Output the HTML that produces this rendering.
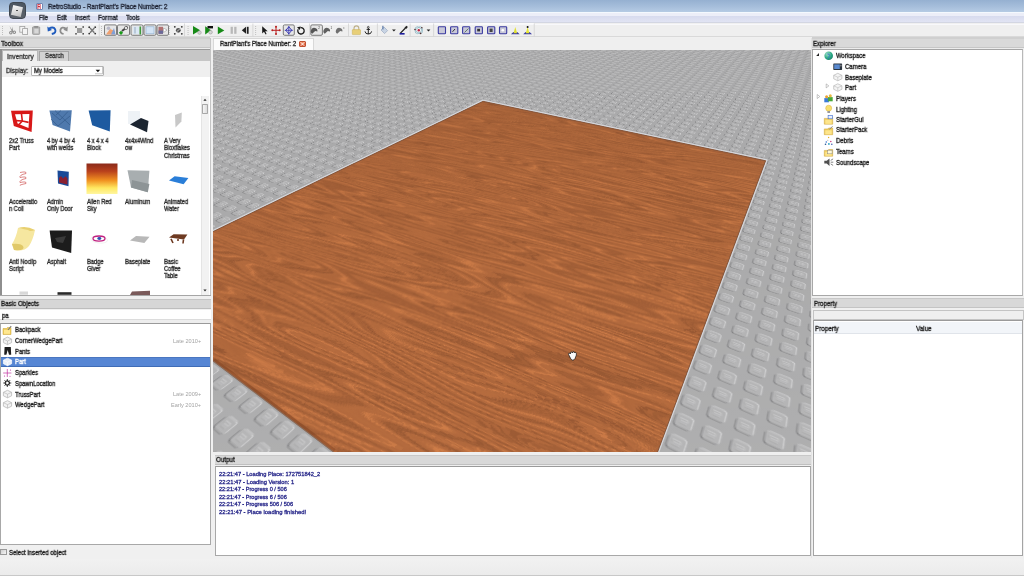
<!DOCTYPE html>
<html><head><meta charset="utf-8">
<style>
*{box-sizing:border-box;margin:0;padding:0}
html,body{width:1024px;height:576px;overflow:hidden;background:#f0f0f0;font-family:"Liberation Sans",sans-serif;color:#000}
.a{position:absolute}
.t{position:absolute;white-space:nowrap;font-size:6px;line-height:1;will-change:transform}
svg{overflow:visible}
</style></head><body>
<!-- title bar -->
<div class="a" style="left:0px;top:0px;width:1024px;height:11.6px;background:linear-gradient(#95b0d1,#a6bedb 55%,#b5cbe4)"></div>
<div class="a" style="left:0px;top:11.6px;width:1024px;height:1.4px;background:#f4f9fe"></div>
<div class="a" style="left:0px;top:13px;width:1024px;height:3px;background:#eceef8"></div>
<div class="a" style="left:0px;top:16px;width:1024px;height:6.2px;background:linear-gradient(#d7dbee,#e1e4f3)"></div>
<div class="a" style="left:0px;top:22.2px;width:1024px;height:1.3px;background:#d3d6e2"></div>
<div class="a" style="left:8.8px;top:2.1px;width:17px;height:17px;border-radius:4px;background:linear-gradient(#4c5661,#5c626a);border:0.6px solid #3e4650"></div>
<div class="a" style="left:11.85px;top:5.65px;width:9.7px;height:9.7px;background:linear-gradient(150deg,#fafafa,#d0d0d0 70%,#bdbdbd);transform:rotate(13deg)"></div>
<div class="a" style="left:16.2px;top:9.6px;width:1.7px;height:1.7px;background:#2a2a2a;border-radius:0.4px"></div>
<div class="a" style="left:36px;top:2.5px;width:7.2px;height:7.5px;background:#fff;border:0.8px solid #7388b4;border-radius:1px"></div>
<div class="t" style="left:37.3px;top:4.00px;font-size:6.72px;color:#c8283c;transform:scaleX(0.893);transform-origin:0 0;font-weight:bold">R</div>
<div class="t" style="left:48.2px;top:3.00px;font-size:7.06px;color:#1c2030;transform:scaleX(0.893);transform-origin:0 0;-webkit-text-stroke:0.32px #1c2030">RetroStudio - RantPlant's Place Number: 2</div>
<div class="t" style="left:38.8px;top:15.00px;font-size:6.27px;color:#22262e;transform:scaleX(0.893);transform-origin:0 0;-webkit-text-stroke:0.32px #22262e">File</div>
<div class="t" style="left:56.7px;top:15.00px;font-size:6.27px;color:#22262e;transform:scaleX(0.893);transform-origin:0 0;-webkit-text-stroke:0.32px #22262e">Edit</div>
<div class="t" style="left:75.1px;top:15.00px;font-size:6.61px;color:#22262e;transform:scaleX(0.893);transform-origin:0 0;-webkit-text-stroke:0.32px #22262e">Insert</div>
<div class="t" style="left:97.7px;top:15.00px;font-size:6.94px;color:#22262e;transform:scaleX(0.893);transform-origin:0 0;-webkit-text-stroke:0.32px #22262e">Format</div>
<div class="t" style="left:125.5px;top:15.00px;font-size:6.61px;color:#22262e;transform:scaleX(0.893);transform-origin:0 0;-webkit-text-stroke:0.32px #22262e">Tools</div>
<!-- toolbar -->
<div class="a" style="left:0px;top:23.5px;width:1024px;height:1px;background:#f8f8fb"></div>
<div class="a" style="left:0px;top:24.5px;width:1024px;height:12px;background:#efefef"></div>
<div class="a" style="left:0px;top:36.4px;width:1024px;height:1.1px;background:#d9d9d9"></div>
<div class="a" style="left:0px;top:37.5px;width:1024px;height:0.6px;background:#f3f3f3"></div>
<svg class="a" style="left:0;top:0" width="1024" height="40" viewBox="0 0 1024 40">
<rect x="0" y="23" width="534" height="1" fill="#fbfbfb"/><rect x="533.8" y="23.5" width="0.8" height="13" fill="#d2d2d2"/><rect x="2.1" y="26.0" width="0.9" height="0.9" fill="#b4b4b4"/><rect x="2.1" y="28.0" width="0.9" height="0.9" fill="#b4b4b4"/><rect x="2.1" y="30.0" width="0.9" height="0.9" fill="#b4b4b4"/><rect x="2.1" y="32.0" width="0.9" height="0.9" fill="#b4b4b4"/><rect x="2.1" y="34.0" width="0.9" height="0.9" fill="#b4b4b4"/><rect x="101.1" y="26.0" width="0.9" height="0.9" fill="#b4b4b4"/><rect x="101.1" y="28.0" width="0.9" height="0.9" fill="#b4b4b4"/><rect x="101.1" y="30.0" width="0.9" height="0.9" fill="#b4b4b4"/><rect x="101.1" y="32.0" width="0.9" height="0.9" fill="#b4b4b4"/><rect x="101.1" y="34.0" width="0.9" height="0.9" fill="#b4b4b4"/><rect x="168.8" y="26.0" width="0.9" height="0.9" fill="#b4b4b4"/><rect x="168.8" y="28.0" width="0.9" height="0.9" fill="#b4b4b4"/><rect x="168.8" y="30.0" width="0.9" height="0.9" fill="#b4b4b4"/><rect x="168.8" y="32.0" width="0.9" height="0.9" fill="#b4b4b4"/><rect x="168.8" y="34.0" width="0.9" height="0.9" fill="#b4b4b4"/><rect x="187.6" y="26.0" width="0.9" height="0.9" fill="#b4b4b4"/><rect x="187.6" y="28.0" width="0.9" height="0.9" fill="#b4b4b4"/><rect x="187.6" y="30.0" width="0.9" height="0.9" fill="#b4b4b4"/><rect x="187.6" y="32.0" width="0.9" height="0.9" fill="#b4b4b4"/><rect x="187.6" y="34.0" width="0.9" height="0.9" fill="#b4b4b4"/><rect x="255.2" y="26.0" width="0.9" height="0.9" fill="#b4b4b4"/><rect x="255.2" y="28.0" width="0.9" height="0.9" fill="#b4b4b4"/><rect x="255.2" y="30.0" width="0.9" height="0.9" fill="#b4b4b4"/><rect x="255.2" y="32.0" width="0.9" height="0.9" fill="#b4b4b4"/><rect x="255.2" y="34.0" width="0.9" height="0.9" fill="#b4b4b4"/><rect x="98.8" y="23.5" width="0.8" height="13" fill="#d2d2d2"/><rect x="166.8" y="23.5" width="0.8" height="13" fill="#d2d2d2"/><rect x="184.2" y="23.5" width="0.8" height="13" fill="#d2d2d2"/><rect x="252.5" y="23.5" width="0.8" height="13" fill="#d2d2d2"/><rect x="309.2" y="23.5" width="0.8" height="13" fill="#d2d2d2"/><rect x="348.2" y="23.5" width="0.8" height="13" fill="#d2d2d2"/><rect x="376.9" y="23.5" width="0.8" height="13" fill="#d2d2d2"/><rect x="409.7" y="23.5" width="0.8" height="13" fill="#d2d2d2"/><rect x="433.3" y="23.5" width="0.8" height="13" fill="#d2d2d2"/><g fill="#8a8a8a"><circle cx="10.8" cy="32.8" r="1.7"/><circle cx="14.3" cy="32.2" r="1.7"/><path d="M9.5 26 L13.2 31.5 L12.2 32 Z"/><path d="M12.6 26.5 L11.5 31.8 L12.8 31.8Z"/></g><circle cx="10.8" cy="32.8" r="0.7" fill="#efefef"/><circle cx="14.3" cy="32.2" r="0.7" fill="#efefef"/><g fill="#f4f4f4" stroke="#a0a0a0" stroke-width="0.8"><rect x="19.8" y="26.4" width="5" height="5.8"/><rect x="22.6" y="28.6" width="5" height="5.8"/></g><rect x="32.5" y="26.8" width="7.2" height="7.6" rx="0.8" fill="#b5b5b5" stroke="#8f8f8f" stroke-width="0.7"/><rect x="34.2" y="26" width="3.8" height="1.8" fill="#8f8f8f"/><rect x="34.3" y="28.8" width="4.2" height="4.6" fill="#d8d8d8"/><path d="M49 28.5 Q53.5 26.2 55.2 29.5 Q56.6 33 51.8 34" fill="none" stroke="#1f5bbd" stroke-width="1.9"/><path d="M47.3 26.6 L47.8 31.6 L52 30 Z" fill="#1f5bbd"/><path d="M66 28.6 Q61.6 26.3 60.5 29.6 Q59.6 33 63.6 34" fill="none" stroke="#8c8c8c" stroke-width="1.8"/><path d="M67.8 26.4 L67.4 31.6 L63.4 29.8 Z" fill="#8c8c8c"/><g fill="#555"><rect x="75.2" y="26.2" width="1.6" height="1.6"/><rect x="82.4" y="26.2" width="1.6" height="1.6"/><rect x="75.2" y="33" width="1.6" height="1.6"/><rect x="82.4" y="33" width="1.6" height="1.6"/></g><rect x="77" y="28" width="5.2" height="5" fill="#9a9a9a"/><g fill="#333"><circle cx="89.2" cy="27.2" r="0.9"/><circle cx="95.2" cy="27.2" r="0.9"/><circle cx="89.2" cy="33.6" r="0.9"/><circle cx="95.2" cy="33.6" r="0.9"/></g><path d="M90 28 L94.4 32.8 M94.4 28 L90 32.8" stroke="#777" stroke-width="1.4"/><rect x="104.5" y="24.9" width="12.0" height="10.4" rx="1.3" fill="#e6e6e6" stroke="#6e6e6e" stroke-width="0.9"/><rect x="117.5" y="24.9" width="12.0" height="10.4" rx="1.3" fill="#e6e6e6" stroke="#6e6e6e" stroke-width="0.9"/><rect x="131.0" y="24.9" width="12.0" height="10.4" rx="1.3" fill="#e6e6e6" stroke="#6e6e6e" stroke-width="0.9"/><rect x="144.0" y="24.9" width="12.0" height="10.4" rx="1.3" fill="#e6e6e6" stroke="#6e6e6e" stroke-width="0.9"/><rect x="157.0" y="24.9" width="11.5" height="10.4" rx="1.3" fill="#e6e6e6" stroke="#6e6e6e" stroke-width="0.9"/><path d="M106 34.5 L110 29 L115 31 L115 34.5Z" fill="#f0a070"/><path d="M111 34.5 L114 28 L115.5 34.5Z" fill="#7fa0d8"/><circle cx="108.5" cy="28.3" r="1.8" fill="#b8b8c8"/><rect x="119.5" y="31.3" width="3" height="3" fill="#1b9a1b" transform="rotate(45 121 32.8)"/><path d="M122 31 L127.5 26.8" stroke="#444" stroke-width="2"/><circle cx="126" cy="28" r="1.6" fill="#eee" stroke="#444" stroke-width="0.6"/><rect x="133" y="26.5" width="6" height="7.6" fill="#dbe8f5"/><rect x="139.5" y="26.5" width="1.6" height="8" fill="#3c9a3c"/><rect x="134.5" y="27" width="1" height="6.5" fill="#9ab"/><rect x="146" y="26.8" width="8" height="7" fill="#d4e4f5" stroke="#8aaed0" stroke-width="0.6"/><rect x="158.5" y="26.8" width="4.5" height="7" fill="#b07070"/><rect x="158.5" y="30.5" width="4.5" height="3.3" fill="#6a6a9a"/><path d="M163.5 28 L167 30 L163.5 32.5Z" fill="#fff" stroke="#888" stroke-width="0.5"/><g fill="#333"><circle cx="174.8" cy="26.8" r="0.9"/><circle cx="181.8" cy="26.8" r="0.9"/><circle cx="174.8" cy="33.8" r="0.9"/><circle cx="181.8" cy="33.8" r="0.9"/></g><circle cx="178.3" cy="30.3" r="2.4" fill="#555"/><path d="M176.8 31.5 L179.8 29" stroke="#ddd" stroke-width="0.8"/><path d="M193 26 L193 34.5 L200.2 30.2Z" fill="#178a17"/><circle cx="199.5" cy="32.6" r="1.8" fill="#d0d0d0" stroke="#999" stroke-width="0.5"/><path d="M205.2 26.2 L205.2 34.5 L211 30.3Z" fill="#178a17"/><rect x="207.5" y="26" width="5.5" height="2.4" fill="#111"/><circle cx="210.5" cy="32.2" r="1.8" fill="#d8d8d8" stroke="#888" stroke-width="0.5"/><path d="M217.8 26.5 L217.8 34.2 L224.3 30.4Z" fill="#178a17"/><rect x="230.6" y="26.8" width="2.3" height="7" fill="#b8b8b8"/><rect x="234.2" y="26.8" width="2.3" height="7" fill="#b8b8b8"/><path d="M241.8 30.3 L246 26.8 L246 33.8Z" fill="#222"/><rect x="246.8" y="26.8" width="1.8" height="7" fill="#222"/><path d="M262.2 26.3 L262.2 33.5 L264 31.8 L265.6 34.4 L266.6 33.9 L265.2 31.2 L267.7 31.2Z" fill="#1a1a1a"/><path d="M276 26.5 V34.2 M272.2 30.3 H279.8" stroke="#b82020" stroke-width="1"/><g fill="#b82020"><circle cx="276" cy="26.7" r="1"/><circle cx="276" cy="34" r="1"/><circle cx="272.3" cy="30.3" r="1"/><circle cx="279.7" cy="30.3" r="1"/></g><rect x="283.3" y="24.9" width="11.0" height="10.4" rx="1.3" fill="#e6e6e6" stroke="#6e6e6e" stroke-width="0.9"/><path d="M288.8 26.8 L291.8 30.3 L288.8 33.8 L285.8 30.3Z" fill="none" stroke="#2a2ab0" stroke-width="0.9"/><path d="M288.8 26 V34.6 M284.8 30.3 H292.8" stroke="#2a2ab0" stroke-width="0.8"/><path d="M300.6 27.6 A3.2 3.2 0 1 1 298.2 29.2" fill="none" stroke="#1a1a1a" stroke-width="1.3"/><path d="M297 27.2 L300.8 26.6 L299.8 30Z" fill="#1a1a1a"/><rect x="310.8" y="24.9" width="11.6" height="10.4" rx="1.3" fill="#e6e6e6" stroke="#6e6e6e" stroke-width="0.9"/><path d="M312.2 33.8 A3.3 3.3 0 1 1 317.4 31.6 L315.2 31 Z" fill="#555"/><path d="M324.8 33.8 A3.3 3.3 0 1 1 330.0 31.6 L327.8 31 Z" fill="#606060"/><path d="M337.2 33.8 A3.3 3.3 0 1 1 342.4 31.6 L340.2 31 Z" fill="#707070"/><text x="318.3" y="28.8" font-size="3" fill="#333" font-family="Liberation Sans">2</text><text x="330.5" y="28.6" font-size="3" fill="#444" font-family="Liberation Sans">1</text><text x="343" y="28.6" font-size="3" fill="#777" font-family="Liberation Sans">x</text><path d="M354 30 V28.3 A2.4 2.4 0 0 1 358.8 28.3 V30" fill="none" stroke="#bdb08a" stroke-width="1.1"/><rect x="352.3" y="29.6" width="8.2" height="5" rx="0.6" fill="#e8cf78" stroke="#c9ae55" stroke-width="0.5"/><circle cx="368.3" cy="27.3" r="0.9" fill="none" stroke="#222" stroke-width="0.7"/><path d="M368.3 28 V34 M366.6 29.4 H370 M365 31.4 Q365.5 34.2 368.3 34 Q371.1 34.2 371.6 31.4" fill="none" stroke="#222" stroke-width="1"/><path d="M381 30 L384 27 L387.6 30.6 L384.6 33.6Z" fill="#c8d4e4" stroke="#90a0b8" stroke-width="0.6"/><rect x="382.3" y="25.8" width="1.2" height="3.6" fill="#5a78a8"/><path d="M392 29.6 L395.8 29.6 L393.9 31.6Z" fill="#222"/><path d="M400.2 33.4 L405.5 28" stroke="#222" stroke-width="1.3"/><path d="M404.5 27.4 L406.6 25.8 L407.8 27 L406.2 29.1Z" fill="#222"/><rect x="399.6" y="33" width="5" height="1.6" fill="#1c1c9c"/><ellipse cx="418.8" cy="30.2" rx="4.2" ry="2.6" fill="none" stroke="#7ab" stroke-width="0.6" transform="rotate(40 418.8 30.2)"/><ellipse cx="418.8" cy="30.2" rx="4.2" ry="2.6" fill="none" stroke="#7ab" stroke-width="0.6" transform="rotate(-40 418.8 30.2)"/><circle cx="418.8" cy="30.2" r="1.2" fill="#c02040"/><circle cx="415" cy="29.5" r="0.8" fill="#533"/><circle cx="421.8" cy="27.8" r="0.8" fill="#533"/><circle cx="420.6" cy="33.4" r="0.8" fill="#533"/><path d="M426.6 29.6 L430.4 29.6 L428.5 31.6Z" fill="#222"/><rect x="438.3" y="26.8" width="7.2" height="7" rx="0.8" fill="#c8c8d8" stroke="#3a3aa0" stroke-width="1.1"/><rect x="450.6" y="26.8" width="7.2" height="7" rx="0.8" fill="#c8c8d8" stroke="#3a3aa0" stroke-width="1.1"/><rect x="462.6" y="26.8" width="7.2" height="7" rx="0.8" fill="#c8c8d8" stroke="#3a3aa0" stroke-width="1.1"/><rect x="475.2" y="26.8" width="7.2" height="7" rx="0.8" fill="#c8c8d8" stroke="#3a3aa0" stroke-width="1.1"/><rect x="487.6" y="26.8" width="7.2" height="7" rx="0.8" fill="#c8c8d8" stroke="#3a3aa0" stroke-width="1.1"/><rect x="499.5" y="26.8" width="7.2" height="7" rx="0.8" fill="#c8c8d8" stroke="#3a3aa0" stroke-width="1.1"/><path d="M452.5 31.8 L455 29" stroke="#222" stroke-width="0.9"/><path d="M464.5 32.5 L468.5 28.5" stroke="#4a6a4a" stroke-width="0.8"/><rect x="477.2" y="28.8" width="2.8" height="2.6" fill="#333"/><rect x="489.6" y="28.6" width="3" height="3.4" fill="#444"/><circle cx="502.8" cy="30.3" r="1.3" fill="#fff"/><path d="M510.9 34.2 L519.6999999999999 34.2 L517.1999999999999 32 L513.4 32Z" fill="#3a3aa0"/><path d="M513.5 33.2 L515.3 27 L517.1 33.2Z" fill="#e0e030"/><path d="M523.2 34.2 L532.0 34.2 L529.5 32 L525.7 32Z" fill="#3a3aa0"/><path d="M525.8000000000001 33.2 L527.6 27 L529.4000000000001 33.2Z" fill="#e8e830"/><circle cx="527.6" cy="27" r="1" fill="#111"/></svg>
<!-- viewport -->
<div id="view" class="a" style="left:213px;top:50px;width:598px;height:402px;background:#acacad;overflow:hidden">
<div class="a" style="left:0;top:0;width:598px;height:402px;clip-path:polygon(270px 0,270px 51px,282px 402px,598px 402px,598px 0)"><svg class="a" width="2060" height="1940" style="left:0;top:0;transform-origin:0 0;transform:matrix3d(0.11417096,0.025133135,0,-0.00019577507,-0.20412521,0.040838847,0,-0.00031814244,0,0,1,0,214.72203,-51.111953,0,1)">
<defs><pattern id="rstud" width="20" height="20" patternUnits="userSpaceOnUse">
<rect width="20" height="20" fill="#aaaaab"/>
<rect x="3.4" y="5.2" width="12" height="11.4" rx="2.6" fill="#7e7e80"/>
<rect x="5.1" y="3.5" width="12" height="11.4" rx="2.6" fill="#d2d2d3"/>
<rect x="4.3" y="4.3" width="12" height="11.4" rx="2.6" fill="#b2b2b3"/>
<path d="M7.5 7.5 h5.5 v2.2 h-5.5 z M7.5 11.5 h5.5" fill="none" stroke="#c4c4c5" stroke-width="0.9"/>
<path d="M7.2 8.2 v1.8 M7.2 12 h5.5" fill="none" stroke="#9a9a9b" stroke-width="0.6"/>
</pattern></defs>
<filter id="rbb0" x="0" y="0" width="2060" height="1940" filterUnits="userSpaceOnUse"><feGaussianBlur stdDeviation="1.3"/></filter><clipPath id="rbc0"><path d="M0.0 0.0 L2060.0 0.0 L2060.0 459.3 L0.0 1727.2Z"/></clipPath><g clip-path="url(#rbc0)"><rect width="2060" height="1940" fill="url(#rstud)" filter="url(#rbb0)"/></g>
<filter id="rbb1" x="0" y="0" width="2060" height="1940" filterUnits="userSpaceOnUse"><feGaussianBlur stdDeviation="0.7"/></filter><clipPath id="rbc1"><path d="M2060.0 448.5 L2060.0 730.2 L94.4 1940.0 L0.0 1940.0 L0.0 1716.4Z"/></clipPath><g clip-path="url(#rbc1)"><rect width="2060" height="1940" fill="url(#rstud)" filter="url(#rbb1)"/></g>
<filter id="rbb2" x="0" y="0" width="2060" height="1940" filterUnits="userSpaceOnUse"><feGaussianBlur stdDeviation="0.35"/></filter><clipPath id="rbc2"><path d="M2060.0 719.4 L2060.0 1001.1 L534.6 1940.0 L76.8 1940.0Z"/></clipPath><g clip-path="url(#rbc2)"><rect width="2060" height="1940" fill="url(#rstud)" filter="url(#rbb2)"/></g>
<clipPath id="rbc3"><path d="M2060.0 990.3 L2060.0 1940.0 L517.0 1940.0Z"/></clipPath><g clip-path="url(#rbc3)"><rect width="2060" height="1940" fill="url(#rstud)"/></g>
</svg></div>
<div class="a" style="left:0;top:0;width:598px;height:402px;clip-path:polygon(0 0,270px 0,270px 51px,282px 402px,0 402px)"><svg class="a" width="2060" height="1940" style="left:0;top:0;transform-origin:0 0;transform:matrix3d(0.11444891,0.025194322,0,-0.00019625169,-0.20462216,0.04093827,0,-0.00031891697,0,0,1,0,215.46146,-50.923858,0,1)">
<defs><pattern id="lstud" width="20" height="20" patternUnits="userSpaceOnUse">
<rect width="20" height="20" fill="#aaaaab"/>
<rect x="3.4" y="5.2" width="12" height="11.4" rx="2.6" fill="#7e7e80"/>
<rect x="5.1" y="3.5" width="12" height="11.4" rx="2.6" fill="#d2d2d3"/>
<rect x="4.3" y="4.3" width="12" height="11.4" rx="2.6" fill="#b2b2b3"/>
<path d="M7.5 7.5 h5.5 v2.2 h-5.5 z M7.5 11.5 h5.5" fill="none" stroke="#c4c4c5" stroke-width="0.9"/>
<path d="M7.2 8.2 v1.8 M7.2 12 h5.5" fill="none" stroke="#9a9a9b" stroke-width="0.6"/>
</pattern></defs>
<filter id="lbb0" x="0" y="0" width="2060" height="1940" filterUnits="userSpaceOnUse"><feGaussianBlur stdDeviation="1.3"/></filter><clipPath id="lbc0"><path d="M0.0 0.0 L2060.0 0.0 L2060.0 451.7 L0.0 1719.6Z"/></clipPath><g clip-path="url(#lbc0)"><rect width="2060" height="1940" fill="url(#lstud)" filter="url(#lbb0)"/></g>
<filter id="lbb1" x="0" y="0" width="2060" height="1940" filterUnits="userSpaceOnUse"><feGaussianBlur stdDeviation="0.7"/></filter><clipPath id="lbc1"><path d="M2060.0 440.8 L2060.0 722.6 L82.0 1940.0 L0.0 1940.0 L0.0 1708.7Z"/></clipPath><g clip-path="url(#lbc1)"><rect width="2060" height="1940" fill="url(#lstud)" filter="url(#lbb1)"/></g>
<filter id="lbb2" x="0" y="0" width="2060" height="1940" filterUnits="userSpaceOnUse"><feGaussianBlur stdDeviation="0.35"/></filter><clipPath id="lbc2"><path d="M2060.0 711.7 L2060.0 993.5 L522.2 1940.0 L64.4 1940.0Z"/></clipPath><g clip-path="url(#lbc2)"><rect width="2060" height="1940" fill="url(#lstud)" filter="url(#lbb2)"/></g>
<clipPath id="lbc3"><path d="M2060.0 982.7 L2060.0 1940.0 L504.6 1940.0Z"/></clipPath><g clip-path="url(#lbc3)"><rect width="2060" height="1940" fill="url(#lstud)"/></g>
</svg></div>
<div class="a" style="left:0;top:0;width:598px;height:402px;background:linear-gradient(rgba(255,255,255,0) 35%,rgba(255,255,255,0.06))"></div>
<svg class="a" width="1000" height="1000" style="left:0;top:0;transform-origin:0 0;transform:matrix3d(0.14525791,0.031976491,0,-0.00024908153,-0.32226203,0.064474201,0,-0.00050226638,0,0,1,0,270,51,0,1)">
<defs><filter id="wood0" x="-150" y="-150" width="1300" height="1300" filterUnits="userSpaceOnUse" color-interpolation-filters="sRGB">
<feTurbulence type="fractalNoise" baseFrequency="0.0012 0.018" numOctaves="3" seed="11"/>
<feColorMatrix type="matrix" values="1 0 0 0 0  1 0 0 0 0  1 0 0 0 0  0 0 0 0 1"/>
<feComponentTransfer>
<feFuncR type="table" tableValues="0.716 0.711 0.740 0.843 0.726 0.716 0.602 0.692 0.619 0.711 0.729 0.681 0.724 0.810 0.717 0.700 0.602 0.680 0.587 0.724 0.722 0.683 0.740 0.805 0.721 0.679 0.601 0.711 0.584 0.691 0.733 0.717 0.716 0.844 0.717 0.705 0.611 0.715 0.607 0.726 0.728 0.690 0.719 0.806 0.698 0.676 0.615 0.699 0.574 0.713 0.702 0.690 0.741 0.821 0.706 0.696 0.634 0.673 0.620 0.682 0.722 0.715 0.703 0.835 0.709 0.700 0.601 0.672 0.583 0.726 0.696 0.711 0.746 0.843 0.708 0.690 0.626 0.707 0.579 0.716 0.724 0.716 0.704 0.843 0.696 0.689 0.630 0.713 0.590 0.724 0.712 0.690 0.717 0.807 0.695 0.680 0.633 0.717 0.582 0.683 0.733 0.701 0.721 0.809 0.720 0.712 0.622 0.690 0.577 0.724 0.688 0.699 0.742 0.804 0.726 0.718 0.631 0.707 0.579 0.701 0.693 0.715 0.716 0.820 0.739 0.713 0.647 0.692"/>
<feFuncG type="table" tableValues="0.425 0.422 0.441 0.510 0.433 0.426 0.350 0.410 0.361 0.423 0.434 0.402 0.431 0.488 0.426 0.415 0.350 0.402 0.340 0.431 0.430 0.404 0.441 0.485 0.429 0.401 0.350 0.423 0.338 0.409 0.437 0.426 0.426 0.510 0.426 0.418 0.356 0.425 0.353 0.433 0.434 0.408 0.428 0.485 0.414 0.399 0.359 0.414 0.332 0.424 0.417 0.409 0.442 0.495 0.419 0.412 0.371 0.397 0.362 0.403 0.429 0.425 0.417 0.505 0.421 0.415 0.350 0.397 0.337 0.432 0.412 0.422 0.446 0.510 0.420 0.408 0.366 0.420 0.335 0.426 0.431 0.426 0.418 0.510 0.412 0.408 0.368 0.424 0.342 0.431 0.423 0.409 0.426 0.486 0.412 0.402 0.371 0.426 0.337 0.404 0.437 0.416 0.429 0.488 0.428 0.423 0.364 0.409 0.334 0.431 0.407 0.414 0.443 0.484 0.432 0.427 0.369 0.420 0.335 0.416 0.411 0.425 0.426 0.494 0.441 0.424 0.380 0.410"/>
<feFuncB type="table" tableValues="0.247 0.245 0.257 0.297 0.252 0.248 0.203 0.238 0.210 0.246 0.252 0.234 0.251 0.284 0.248 0.241 0.203 0.234 0.198 0.251 0.250 0.235 0.257 0.282 0.249 0.233 0.203 0.246 0.196 0.238 0.254 0.248 0.247 0.297 0.248 0.243 0.207 0.247 0.205 0.252 0.252 0.237 0.249 0.282 0.241 0.232 0.208 0.241 0.193 0.246 0.242 0.237 0.257 0.288 0.244 0.240 0.216 0.231 0.210 0.234 0.250 0.247 0.243 0.294 0.245 0.241 0.203 0.231 0.196 0.251 0.240 0.246 0.259 0.297 0.244 0.237 0.212 0.244 0.195 0.248 0.251 0.248 0.243 0.297 0.240 0.237 0.214 0.247 0.199 0.251 0.246 0.238 0.248 0.283 0.239 0.234 0.215 0.248 0.196 0.235 0.254 0.242 0.250 0.284 0.249 0.246 0.211 0.237 0.194 0.251 0.237 0.241 0.257 0.282 0.251 0.248 0.214 0.244 0.195 0.242 0.239 0.247 0.248 0.288 0.256 0.246 0.221 0.238"/>
</feComponentTransfer><feGaussianBlur stdDeviation="0.2 3.2"/>
</filter><filter id="wood1" x="-150" y="-150" width="1300" height="1300" filterUnits="userSpaceOnUse" color-interpolation-filters="sRGB">
<feTurbulence type="fractalNoise" baseFrequency="0.0012 0.018" numOctaves="3" seed="11"/>
<feColorMatrix type="matrix" values="1 0 0 0 0  1 0 0 0 0  1 0 0 0 0  0 0 0 0 1"/>
<feComponentTransfer>
<feFuncR type="table" tableValues="0.716 0.711 0.740 0.843 0.726 0.716 0.602 0.692 0.619 0.711 0.729 0.681 0.724 0.810 0.717 0.700 0.602 0.680 0.587 0.724 0.722 0.683 0.740 0.805 0.721 0.679 0.601 0.711 0.584 0.691 0.733 0.717 0.716 0.844 0.717 0.705 0.611 0.715 0.607 0.726 0.728 0.690 0.719 0.806 0.698 0.676 0.615 0.699 0.574 0.713 0.702 0.690 0.741 0.821 0.706 0.696 0.634 0.673 0.620 0.682 0.722 0.715 0.703 0.835 0.709 0.700 0.601 0.672 0.583 0.726 0.696 0.711 0.746 0.843 0.708 0.690 0.626 0.707 0.579 0.716 0.724 0.716 0.704 0.843 0.696 0.689 0.630 0.713 0.590 0.724 0.712 0.690 0.717 0.807 0.695 0.680 0.633 0.717 0.582 0.683 0.733 0.701 0.721 0.809 0.720 0.712 0.622 0.690 0.577 0.724 0.688 0.699 0.742 0.804 0.726 0.718 0.631 0.707 0.579 0.701 0.693 0.715 0.716 0.820 0.739 0.713 0.647 0.692"/>
<feFuncG type="table" tableValues="0.425 0.422 0.441 0.510 0.433 0.426 0.350 0.410 0.361 0.423 0.434 0.402 0.431 0.488 0.426 0.415 0.350 0.402 0.340 0.431 0.430 0.404 0.441 0.485 0.429 0.401 0.350 0.423 0.338 0.409 0.437 0.426 0.426 0.510 0.426 0.418 0.356 0.425 0.353 0.433 0.434 0.408 0.428 0.485 0.414 0.399 0.359 0.414 0.332 0.424 0.417 0.409 0.442 0.495 0.419 0.412 0.371 0.397 0.362 0.403 0.429 0.425 0.417 0.505 0.421 0.415 0.350 0.397 0.337 0.432 0.412 0.422 0.446 0.510 0.420 0.408 0.366 0.420 0.335 0.426 0.431 0.426 0.418 0.510 0.412 0.408 0.368 0.424 0.342 0.431 0.423 0.409 0.426 0.486 0.412 0.402 0.371 0.426 0.337 0.404 0.437 0.416 0.429 0.488 0.428 0.423 0.364 0.409 0.334 0.431 0.407 0.414 0.443 0.484 0.432 0.427 0.369 0.420 0.335 0.416 0.411 0.425 0.426 0.494 0.441 0.424 0.380 0.410"/>
<feFuncB type="table" tableValues="0.247 0.245 0.257 0.297 0.252 0.248 0.203 0.238 0.210 0.246 0.252 0.234 0.251 0.284 0.248 0.241 0.203 0.234 0.198 0.251 0.250 0.235 0.257 0.282 0.249 0.233 0.203 0.246 0.196 0.238 0.254 0.248 0.247 0.297 0.248 0.243 0.207 0.247 0.205 0.252 0.252 0.237 0.249 0.282 0.241 0.232 0.208 0.241 0.193 0.246 0.242 0.237 0.257 0.288 0.244 0.240 0.216 0.231 0.210 0.234 0.250 0.247 0.243 0.294 0.245 0.241 0.203 0.231 0.196 0.251 0.240 0.246 0.259 0.297 0.244 0.237 0.212 0.244 0.195 0.248 0.251 0.248 0.243 0.297 0.240 0.237 0.214 0.247 0.199 0.251 0.246 0.238 0.248 0.283 0.239 0.234 0.215 0.248 0.196 0.235 0.254 0.242 0.250 0.284 0.249 0.246 0.211 0.237 0.194 0.251 0.237 0.241 0.257 0.282 0.251 0.248 0.214 0.244 0.195 0.242 0.239 0.247 0.248 0.288 0.256 0.246 0.221 0.238"/>
</feComponentTransfer><feGaussianBlur stdDeviation="0.2 2.2"/>
</filter><filter id="wood2" x="-150" y="-150" width="1300" height="1300" filterUnits="userSpaceOnUse" color-interpolation-filters="sRGB">
<feTurbulence type="fractalNoise" baseFrequency="0.0012 0.018" numOctaves="3" seed="11"/>
<feColorMatrix type="matrix" values="1 0 0 0 0  1 0 0 0 0  1 0 0 0 0  0 0 0 0 1"/>
<feComponentTransfer>
<feFuncR type="table" tableValues="0.716 0.711 0.740 0.843 0.726 0.716 0.602 0.692 0.619 0.711 0.729 0.681 0.724 0.810 0.717 0.700 0.602 0.680 0.587 0.724 0.722 0.683 0.740 0.805 0.721 0.679 0.601 0.711 0.584 0.691 0.733 0.717 0.716 0.844 0.717 0.705 0.611 0.715 0.607 0.726 0.728 0.690 0.719 0.806 0.698 0.676 0.615 0.699 0.574 0.713 0.702 0.690 0.741 0.821 0.706 0.696 0.634 0.673 0.620 0.682 0.722 0.715 0.703 0.835 0.709 0.700 0.601 0.672 0.583 0.726 0.696 0.711 0.746 0.843 0.708 0.690 0.626 0.707 0.579 0.716 0.724 0.716 0.704 0.843 0.696 0.689 0.630 0.713 0.590 0.724 0.712 0.690 0.717 0.807 0.695 0.680 0.633 0.717 0.582 0.683 0.733 0.701 0.721 0.809 0.720 0.712 0.622 0.690 0.577 0.724 0.688 0.699 0.742 0.804 0.726 0.718 0.631 0.707 0.579 0.701 0.693 0.715 0.716 0.820 0.739 0.713 0.647 0.692"/>
<feFuncG type="table" tableValues="0.425 0.422 0.441 0.510 0.433 0.426 0.350 0.410 0.361 0.423 0.434 0.402 0.431 0.488 0.426 0.415 0.350 0.402 0.340 0.431 0.430 0.404 0.441 0.485 0.429 0.401 0.350 0.423 0.338 0.409 0.437 0.426 0.426 0.510 0.426 0.418 0.356 0.425 0.353 0.433 0.434 0.408 0.428 0.485 0.414 0.399 0.359 0.414 0.332 0.424 0.417 0.409 0.442 0.495 0.419 0.412 0.371 0.397 0.362 0.403 0.429 0.425 0.417 0.505 0.421 0.415 0.350 0.397 0.337 0.432 0.412 0.422 0.446 0.510 0.420 0.408 0.366 0.420 0.335 0.426 0.431 0.426 0.418 0.510 0.412 0.408 0.368 0.424 0.342 0.431 0.423 0.409 0.426 0.486 0.412 0.402 0.371 0.426 0.337 0.404 0.437 0.416 0.429 0.488 0.428 0.423 0.364 0.409 0.334 0.431 0.407 0.414 0.443 0.484 0.432 0.427 0.369 0.420 0.335 0.416 0.411 0.425 0.426 0.494 0.441 0.424 0.380 0.410"/>
<feFuncB type="table" tableValues="0.247 0.245 0.257 0.297 0.252 0.248 0.203 0.238 0.210 0.246 0.252 0.234 0.251 0.284 0.248 0.241 0.203 0.234 0.198 0.251 0.250 0.235 0.257 0.282 0.249 0.233 0.203 0.246 0.196 0.238 0.254 0.248 0.247 0.297 0.248 0.243 0.207 0.247 0.205 0.252 0.252 0.237 0.249 0.282 0.241 0.232 0.208 0.241 0.193 0.246 0.242 0.237 0.257 0.288 0.244 0.240 0.216 0.231 0.210 0.234 0.250 0.247 0.243 0.294 0.245 0.241 0.203 0.231 0.196 0.251 0.240 0.246 0.259 0.297 0.244 0.237 0.212 0.244 0.195 0.248 0.251 0.248 0.243 0.297 0.240 0.237 0.214 0.247 0.199 0.251 0.246 0.238 0.248 0.283 0.239 0.234 0.215 0.248 0.196 0.235 0.254 0.242 0.250 0.284 0.249 0.246 0.211 0.237 0.194 0.251 0.237 0.241 0.257 0.282 0.251 0.248 0.214 0.244 0.195 0.242 0.239 0.247 0.248 0.288 0.256 0.246 0.221 0.238"/>
</feComponentTransfer><feGaussianBlur stdDeviation="0.2 1.4"/>
</filter><filter id="wood3" x="-150" y="-150" width="1300" height="1300" filterUnits="userSpaceOnUse" color-interpolation-filters="sRGB">
<feTurbulence type="fractalNoise" baseFrequency="0.0012 0.018" numOctaves="3" seed="11"/>
<feColorMatrix type="matrix" values="1 0 0 0 0  1 0 0 0 0  1 0 0 0 0  0 0 0 0 1"/>
<feComponentTransfer>
<feFuncR type="table" tableValues="0.716 0.711 0.740 0.843 0.726 0.716 0.602 0.692 0.619 0.711 0.729 0.681 0.724 0.810 0.717 0.700 0.602 0.680 0.587 0.724 0.722 0.683 0.740 0.805 0.721 0.679 0.601 0.711 0.584 0.691 0.733 0.717 0.716 0.844 0.717 0.705 0.611 0.715 0.607 0.726 0.728 0.690 0.719 0.806 0.698 0.676 0.615 0.699 0.574 0.713 0.702 0.690 0.741 0.821 0.706 0.696 0.634 0.673 0.620 0.682 0.722 0.715 0.703 0.835 0.709 0.700 0.601 0.672 0.583 0.726 0.696 0.711 0.746 0.843 0.708 0.690 0.626 0.707 0.579 0.716 0.724 0.716 0.704 0.843 0.696 0.689 0.630 0.713 0.590 0.724 0.712 0.690 0.717 0.807 0.695 0.680 0.633 0.717 0.582 0.683 0.733 0.701 0.721 0.809 0.720 0.712 0.622 0.690 0.577 0.724 0.688 0.699 0.742 0.804 0.726 0.718 0.631 0.707 0.579 0.701 0.693 0.715 0.716 0.820 0.739 0.713 0.647 0.692"/>
<feFuncG type="table" tableValues="0.425 0.422 0.441 0.510 0.433 0.426 0.350 0.410 0.361 0.423 0.434 0.402 0.431 0.488 0.426 0.415 0.350 0.402 0.340 0.431 0.430 0.404 0.441 0.485 0.429 0.401 0.350 0.423 0.338 0.409 0.437 0.426 0.426 0.510 0.426 0.418 0.356 0.425 0.353 0.433 0.434 0.408 0.428 0.485 0.414 0.399 0.359 0.414 0.332 0.424 0.417 0.409 0.442 0.495 0.419 0.412 0.371 0.397 0.362 0.403 0.429 0.425 0.417 0.505 0.421 0.415 0.350 0.397 0.337 0.432 0.412 0.422 0.446 0.510 0.420 0.408 0.366 0.420 0.335 0.426 0.431 0.426 0.418 0.510 0.412 0.408 0.368 0.424 0.342 0.431 0.423 0.409 0.426 0.486 0.412 0.402 0.371 0.426 0.337 0.404 0.437 0.416 0.429 0.488 0.428 0.423 0.364 0.409 0.334 0.431 0.407 0.414 0.443 0.484 0.432 0.427 0.369 0.420 0.335 0.416 0.411 0.425 0.426 0.494 0.441 0.424 0.380 0.410"/>
<feFuncB type="table" tableValues="0.247 0.245 0.257 0.297 0.252 0.248 0.203 0.238 0.210 0.246 0.252 0.234 0.251 0.284 0.248 0.241 0.203 0.234 0.198 0.251 0.250 0.235 0.257 0.282 0.249 0.233 0.203 0.246 0.196 0.238 0.254 0.248 0.247 0.297 0.248 0.243 0.207 0.247 0.205 0.252 0.252 0.237 0.249 0.282 0.241 0.232 0.208 0.241 0.193 0.246 0.242 0.237 0.257 0.288 0.244 0.240 0.216 0.231 0.210 0.234 0.250 0.247 0.243 0.294 0.245 0.241 0.203 0.231 0.196 0.251 0.240 0.246 0.259 0.297 0.244 0.237 0.212 0.244 0.195 0.248 0.251 0.248 0.243 0.297 0.240 0.237 0.214 0.247 0.199 0.251 0.246 0.238 0.248 0.283 0.239 0.234 0.215 0.248 0.196 0.235 0.254 0.242 0.250 0.284 0.249 0.246 0.211 0.237 0.194 0.251 0.237 0.241 0.257 0.282 0.251 0.248 0.214 0.244 0.195 0.242 0.239 0.247 0.248 0.288 0.256 0.246 0.221 0.238"/>
</feComponentTransfer><feGaussianBlur stdDeviation="0.2 0.9"/>
</filter><filter id="wood4" x="-150" y="-150" width="1300" height="1300" filterUnits="userSpaceOnUse" color-interpolation-filters="sRGB">
<feTurbulence type="fractalNoise" baseFrequency="0.0012 0.018" numOctaves="3" seed="11"/>
<feColorMatrix type="matrix" values="1 0 0 0 0  1 0 0 0 0  1 0 0 0 0  0 0 0 0 1"/>
<feComponentTransfer>
<feFuncR type="table" tableValues="0.716 0.711 0.740 0.843 0.726 0.716 0.602 0.692 0.619 0.711 0.729 0.681 0.724 0.810 0.717 0.700 0.602 0.680 0.587 0.724 0.722 0.683 0.740 0.805 0.721 0.679 0.601 0.711 0.584 0.691 0.733 0.717 0.716 0.844 0.717 0.705 0.611 0.715 0.607 0.726 0.728 0.690 0.719 0.806 0.698 0.676 0.615 0.699 0.574 0.713 0.702 0.690 0.741 0.821 0.706 0.696 0.634 0.673 0.620 0.682 0.722 0.715 0.703 0.835 0.709 0.700 0.601 0.672 0.583 0.726 0.696 0.711 0.746 0.843 0.708 0.690 0.626 0.707 0.579 0.716 0.724 0.716 0.704 0.843 0.696 0.689 0.630 0.713 0.590 0.724 0.712 0.690 0.717 0.807 0.695 0.680 0.633 0.717 0.582 0.683 0.733 0.701 0.721 0.809 0.720 0.712 0.622 0.690 0.577 0.724 0.688 0.699 0.742 0.804 0.726 0.718 0.631 0.707 0.579 0.701 0.693 0.715 0.716 0.820 0.739 0.713 0.647 0.692"/>
<feFuncG type="table" tableValues="0.425 0.422 0.441 0.510 0.433 0.426 0.350 0.410 0.361 0.423 0.434 0.402 0.431 0.488 0.426 0.415 0.350 0.402 0.340 0.431 0.430 0.404 0.441 0.485 0.429 0.401 0.350 0.423 0.338 0.409 0.437 0.426 0.426 0.510 0.426 0.418 0.356 0.425 0.353 0.433 0.434 0.408 0.428 0.485 0.414 0.399 0.359 0.414 0.332 0.424 0.417 0.409 0.442 0.495 0.419 0.412 0.371 0.397 0.362 0.403 0.429 0.425 0.417 0.505 0.421 0.415 0.350 0.397 0.337 0.432 0.412 0.422 0.446 0.510 0.420 0.408 0.366 0.420 0.335 0.426 0.431 0.426 0.418 0.510 0.412 0.408 0.368 0.424 0.342 0.431 0.423 0.409 0.426 0.486 0.412 0.402 0.371 0.426 0.337 0.404 0.437 0.416 0.429 0.488 0.428 0.423 0.364 0.409 0.334 0.431 0.407 0.414 0.443 0.484 0.432 0.427 0.369 0.420 0.335 0.416 0.411 0.425 0.426 0.494 0.441 0.424 0.380 0.410"/>
<feFuncB type="table" tableValues="0.247 0.245 0.257 0.297 0.252 0.248 0.203 0.238 0.210 0.246 0.252 0.234 0.251 0.284 0.248 0.241 0.203 0.234 0.198 0.251 0.250 0.235 0.257 0.282 0.249 0.233 0.203 0.246 0.196 0.238 0.254 0.248 0.247 0.297 0.248 0.243 0.207 0.247 0.205 0.252 0.252 0.237 0.249 0.282 0.241 0.232 0.208 0.241 0.193 0.246 0.242 0.237 0.257 0.288 0.244 0.240 0.216 0.231 0.210 0.234 0.250 0.247 0.243 0.294 0.245 0.241 0.203 0.231 0.196 0.251 0.240 0.246 0.259 0.297 0.244 0.237 0.212 0.244 0.195 0.248 0.251 0.248 0.243 0.297 0.240 0.237 0.214 0.247 0.199 0.251 0.246 0.238 0.248 0.283 0.239 0.234 0.215 0.248 0.196 0.235 0.254 0.242 0.250 0.284 0.249 0.246 0.211 0.237 0.194 0.251 0.237 0.241 0.257 0.282 0.251 0.248 0.214 0.244 0.195 0.242 0.239 0.247 0.248 0.288 0.256 0.246 0.221 0.238"/>
</feComponentTransfer><feGaussianBlur stdDeviation="0.2 0.5"/>
</filter>
<clipPath id="wc0"><path d="M0.0 0.0 L602.4 0.0 L0.0 298.8Z"/></clipPath>
<clipPath id="wc1"><path d="M590.4 0.0 L1000.0 0.0 L1000.0 101.6 L0.0 597.6 L0.0 292.8Z"/></clipPath>
<clipPath id="wc2"><path d="M1000.0 95.6 L1000.0 360.6 L0.0 856.6 L0.0 591.6Z"/></clipPath>
<clipPath id="wc3"><path d="M1000.0 354.6 L1000.0 619.5 L232.9 1000.0 L0.0 1000.0 L0.0 850.6Z"/></clipPath>
<clipPath id="wc4"><path d="M1000.0 613.5 L1000.0 1000.0 L220.9 1000.0Z"/></clipPath>
</defs>
<g clip-path="url(#wc0)"><g transform="rotate(-5 500 500)"><rect x="-150" y="-150" width="1300" height="1300" fill="#b86638" filter="url(#wood0)"/></g></g>
<g clip-path="url(#wc1)"><g transform="rotate(-5 500 500)"><rect x="-150" y="-150" width="1300" height="1300" fill="#b86638" filter="url(#wood1)"/></g></g>
<g clip-path="url(#wc2)"><g transform="rotate(-5 500 500)"><rect x="-150" y="-150" width="1300" height="1300" fill="#b86638" filter="url(#wood2)"/></g></g>
<g clip-path="url(#wc3)"><g transform="rotate(-5 500 500)"><rect x="-150" y="-150" width="1300" height="1300" fill="#b86638" filter="url(#wood3)"/></g></g>
<g clip-path="url(#wc4)"><g transform="rotate(-5 500 500)"><rect x="-150" y="-150" width="1300" height="1300" fill="#b86638" filter="url(#wood4)"/></g></g>
<linearGradient id="wdg" gradientUnits="userSpaceOnUse" x1="0" y1="0" x2="595" y2="1200"><stop offset="0" stop-color="#301808" stop-opacity="0.09"/><stop offset="0.45" stop-color="#301808" stop-opacity="0.05"/><stop offset="1" stop-color="#301808" stop-opacity="0"/></linearGradient><rect width="1000" height="1000" fill="url(#wdg)"/></svg>
<svg class="a" style="left:0;top:0" width="598" height="402">
<path d="M-0.30 180.67 L269.91 50.27 L553.94 109.98 L445.56 402.24" fill="none" stroke="#d4d5d9" stroke-width="1.5" stroke-linejoin="round"/>
<path d="M0.15 181.62 L270.04 51.37 L552.53 110.76 L444.57 401.88" fill="none" stroke="#87573c" stroke-width="1.0" stroke-linejoin="round"/>
<path d="M0 311.1 L120.6 402" fill="none" stroke="#7a3e20" stroke-width="3" opacity="0.45" transform="translate(1.1,-1.5)"/><path d="M0 311.1 L120.6 402" fill="none" stroke="#8a6a58" stroke-width="1.2"/><path d="M-0.6 312.3 L119.6 403.1" fill="none" stroke="#a2a3a6" stroke-width="0.8" opacity="0.7"/>
</svg>
</div>
<!-- left toolbox -->
<div class="a" style="left:0px;top:37.1px;width:210px;height:1.5px;background:#cfcfcf"></div>
<div class="a" style="left:0px;top:38.6px;width:210px;height:8.8px;background:#d9d9d9"></div>
<div class="a" style="left:0px;top:47.4px;width:210px;height:0.7px;background:#c6c6c6"></div>
<div class="a" style="left:0px;top:48.1px;width:210px;height:0.8px;background:#ececec"></div>
<div class="t" style="left:1.0px;top:41.00px;font-size:7.17px;color:#1a1a1a;transform:scaleX(0.893);transform-origin:0 0;-webkit-text-stroke:0.32px #1a1a1a">Toolbox</div>
<div class="a" style="left:0px;top:49px;width:211px;height:12px;background:#c6c6c6;border-top:1.2px solid #9a9a9a"></div>
<div class="a" style="left:0px;top:49px;width:1.6px;height:247px;background:#8e8e8e"></div>
<div class="a" style="left:2px;top:50.3px;width:36.3px;height:11.5px;background:#efefef;border:0.6px solid #b8b8b8;border-bottom:none"></div>
<div class="a" style="left:38.5px;top:51px;width:30.8px;height:10px;background:#d2d2d2;border:0.8px solid #a4a4a4;border-bottom:none"></div>
<div class="t" style="left:6.5px;top:53.00px;font-size:7.28px;color:#333;transform:scaleX(0.893);transform-origin:0 0;-webkit-text-stroke:0.32px #333">Inventory</div>
<div class="t" style="left:44.5px;top:53.00px;font-size:6.61px;color:#333;transform:scaleX(0.893);transform-origin:0 0;-webkit-text-stroke:0.32px #333">Search</div>
<div class="a" style="left:1.6px;top:61px;width:209.4px;height:16px;background:#efefef"></div>
<div class="t" style="left:6.0px;top:68.00px;font-size:6.94px;color:#333;transform:scaleX(0.893);transform-origin:0 0;-webkit-text-stroke:0.32px #333">Display:</div>
<div class="a" style="left:31.3px;top:65.5px;width:73.2px;height:10.7px;background:#fff;border:0.8px solid #b4b4b4;border-radius:1px"></div>
<div class="t" style="left:34.0px;top:68.00px;font-size:6.66px;color:#1a1a1a;transform:scaleX(0.893);transform-origin:0 0;-webkit-text-stroke:0.32px #1a1a1a">My Models</div>
<svg class="a" style="left:0;top:0" width="212" height="300"><path d="M95.6 69.8 L100.2 69.8 L97.9 72.2Z" fill="#111"/><path d="M95 73.8 H102.6 V66.8" fill="none" stroke="#9a9a9a" stroke-width="0.6"/></svg>
<div class="a" style="left:1.6px;top:77px;width:208.6px;height:218px;background:#fff"></div>
<div class="a" style="left:209.8px;top:38px;width:1px;height:258px;background:#c4c4c4"></div>
<div class="a" style="left:0px;top:295px;width:211px;height:1.2px;background:#a6a6a6"></div>
<div class="a" style="left:201.2px;top:96px;width:7.4px;height:199px;background:#f2f2f2;border-left:0.5px solid #e4e4e4"></div>
<div class="a" style="left:201.6px;top:104.2px;width:6.8px;height:9.4px;background:linear-gradient(90deg,#f6f6f6,#dcdcdc);border:0.6px solid #a8a8a8;border-radius:0.8px"></div>
<svg class="a" style="left:0;top:0" width="212" height="300"><path d="M203.4 100.8 L206.6 100.8 L205 98.8Z" fill="#222"/><path d="M203.4 289.6 L206.6 289.6 L205 291.6Z" fill="#222"/><path d="M11 110.8 L32.8 110.6 L31.6 132 L13.8 126Z" fill="#d81818"/><path d="M15 114.2 L29.4 114 L28.5 128 L17.6 123.6Z" fill="#fff"/><path d="M21.5 114 L22.3 121 L15.8 120.6 M22.3 121 L28.6 122.4 M22.3 121 L19 124.5" stroke="#d81818" stroke-width="1.6" fill="none"/><path d="M49.4 110.6 L71.8 110.2 L70 131.5 L52.6 125Z" fill="#4f79ad"/><path d="M52 113 L60 120 L68 111.5 M51 119 L58 126 L70 116 M55 110.6 L70 125 M61 110.5 L56 115" stroke="#2f5584" stroke-width="0.6" fill="none"/><path d="M88.6 110.6 L110.6 110.2 L109.8 131.5 L92.2 125.2Z" fill="#1d5aa0"/><rect x="128" y="111" width="12" height="13" fill="#eef2f6"/><path d="M130 124.5 L141 118 L148.5 121 L147 132.3 Z" fill="#1b2430"/><path d="M175 115 L181.8 112.6 L181.4 121.5 L175.5 127.5Z" fill="#c8c8c8"/><g fill="none" stroke="#c83a3a" stroke-width="0.6"><path d="M20 172.5 Q27 171 26 173.5 Q19 175 20 177.5 Q27 176 26 178.5 Q19 180 20 182.5 Q27 181 26 183.5 Q19 185 20 185.5"/></g><path d="M57.5 170.5 L68.8 171.8 L68.5 186.2 L58 183.6Z" fill="#1a4a98"/><path d="M59 178 L61 176 L63 178.5 L65.5 176.2 L67.4 178.5 L67.4 184.6 L59 182.6Z" fill="#8a2030"/><defs><linearGradient id="sky" x1="0" y1="0" x2="0" y2="1"><stop offset="0" stop-color="#8a2a1a"/><stop offset="0.25" stop-color="#b8401c"/><stop offset="0.55" stop-color="#f09020"/><stop offset="0.8" stop-color="#ffe860"/><stop offset="1" stop-color="#fff6a0"/></linearGradient></defs><rect x="86.5" y="163.5" width="31" height="30.5" fill="url(#sky)"/><path d="M127.5 170.3 L149.4 170.8 L147.8 192.2 L131 187.4Z" fill="#a8aeb0"/><path d="M131 187.4 L147.8 192.2 L149.4 184 L132 180Z" fill="#8d9496"/><path d="M169 180.6 L174.6 176.2 L188.4 178 L183.6 184.2Z" fill="#2a7ed8"/><path d="M12 244 Q16 238 18 228 L35 230 Q33 240 29 246 Q24 252 14 250Z" fill="#f6e7a0"/><path d="M12 244 Q20 243 23 246 Q26 251 14 250Z" fill="#e0c868"/><path d="M18 228 Q26 225 35 230 Q30 232 28 230Z" fill="#e8d070"/><path d="M49.6 230.6 L72 230.6 L71.2 253 L52 247.5Z" fill="#1c1c1c"/><path d="M55 238 L66 236 L63 243 L57 242Z" fill="#3a3a3a"/><ellipse cx="99.2" cy="239.6" rx="8.4" ry="3.4" fill="#fff" stroke="#ddd" stroke-width="0.4" transform="rotate(6 99.2 239.6)"/><ellipse cx="99" cy="238.6" rx="6" ry="2.6" fill="none" stroke="#c02080" stroke-width="1.3"/><ellipse cx="99.3" cy="238.5" rx="2" ry="1.4" fill="#3050b0"/><path d="M130 240.5 L136 236 L149.5 236.8 L144.4 243Z" fill="#b8b8b8"/><path d="M169 237.6 L173.6 234.2 L187.4 234.4 L184 239.6Z" fill="#6e3a22"/><path d="M171 238.8 L173 243 M183.5 239.5 L183 243.5 M178 239 V241" stroke="#6e3a22" stroke-width="1.6"/><rect x="19.5" y="291.5" width="8.5" height="3.2" fill="#d8d8d8"/><rect x="57.5" y="292.2" width="14" height="2.6" fill="#2a2a2a"/><path d="M130 295 L132 291.4 L150 290.8 L150 295Z" fill="#7a5a5a"/></svg>
<div class="t" style="left:8.6px;top:138.00px;font-size:6.38px;color:#2a2a2a;transform:scaleX(0.893);transform-origin:0 0;-webkit-text-stroke:0.32px #2a2a2a">2x2 Truss</div>
<div class="t" style="left:8.6px;top:145.00px;font-size:6.38px;color:#2a2a2a;transform:scaleX(0.893);transform-origin:0 0;-webkit-text-stroke:0.32px #2a2a2a">Part</div>
<div class="t" style="left:47.3px;top:138.00px;font-size:6.38px;color:#2a2a2a;transform:scaleX(0.893);transform-origin:0 0;-webkit-text-stroke:0.32px #2a2a2a">4 by 4 by 4</div>
<div class="t" style="left:47.3px;top:145.00px;font-size:6.38px;color:#2a2a2a;transform:scaleX(0.893);transform-origin:0 0;-webkit-text-stroke:0.32px #2a2a2a">with welds</div>
<div class="t" style="left:86.5px;top:138.00px;font-size:6.38px;color:#2a2a2a;transform:scaleX(0.893);transform-origin:0 0;-webkit-text-stroke:0.32px #2a2a2a">4 x 4 x 4</div>
<div class="t" style="left:86.5px;top:145.00px;font-size:6.38px;color:#2a2a2a;transform:scaleX(0.893);transform-origin:0 0;-webkit-text-stroke:0.32px #2a2a2a">Block</div>
<div class="t" style="left:125.1px;top:138.00px;font-size:6.38px;color:#2a2a2a;transform:scaleX(0.893);transform-origin:0 0;-webkit-text-stroke:0.32px #2a2a2a">4x4x4Wind</div>
<div class="t" style="left:125.1px;top:145.00px;font-size:6.38px;color:#2a2a2a;transform:scaleX(0.893);transform-origin:0 0;-webkit-text-stroke:0.32px #2a2a2a">ow</div>
<div class="t" style="left:164.2px;top:138.00px;font-size:6.38px;color:#2a2a2a;transform:scaleX(0.893);transform-origin:0 0;-webkit-text-stroke:0.32px #2a2a2a">A Very</div>
<div class="t" style="left:164.2px;top:145.00px;font-size:6.38px;color:#2a2a2a;transform:scaleX(0.893);transform-origin:0 0;-webkit-text-stroke:0.32px #2a2a2a">Bloxflakes</div>
<div class="t" style="left:164.2px;top:153.00px;font-size:6.38px;color:#2a2a2a;transform:scaleX(0.893);transform-origin:0 0;-webkit-text-stroke:0.32px #2a2a2a">Christmas</div>
<div class="t" style="left:8.6px;top:199.00px;font-size:6.38px;color:#2a2a2a;transform:scaleX(0.893);transform-origin:0 0;-webkit-text-stroke:0.32px #2a2a2a">Acceleratio</div>
<div class="t" style="left:8.6px;top:206.00px;font-size:6.38px;color:#2a2a2a;transform:scaleX(0.893);transform-origin:0 0;-webkit-text-stroke:0.32px #2a2a2a">n Coil</div>
<div class="t" style="left:47.3px;top:199.00px;font-size:6.38px;color:#2a2a2a;transform:scaleX(0.893);transform-origin:0 0;-webkit-text-stroke:0.32px #2a2a2a">Admin</div>
<div class="t" style="left:47.3px;top:206.00px;font-size:6.38px;color:#2a2a2a;transform:scaleX(0.893);transform-origin:0 0;-webkit-text-stroke:0.32px #2a2a2a">Only Door</div>
<div class="t" style="left:86.5px;top:199.00px;font-size:6.38px;color:#2a2a2a;transform:scaleX(0.893);transform-origin:0 0;-webkit-text-stroke:0.32px #2a2a2a">Alien Red</div>
<div class="t" style="left:86.5px;top:206.00px;font-size:6.38px;color:#2a2a2a;transform:scaleX(0.893);transform-origin:0 0;-webkit-text-stroke:0.32px #2a2a2a">Sky</div>
<div class="t" style="left:125.1px;top:199.00px;font-size:6.38px;color:#2a2a2a;transform:scaleX(0.893);transform-origin:0 0;-webkit-text-stroke:0.32px #2a2a2a">Aluminum</div>
<div class="t" style="left:164.2px;top:199.00px;font-size:6.38px;color:#2a2a2a;transform:scaleX(0.893);transform-origin:0 0;-webkit-text-stroke:0.32px #2a2a2a">Animated</div>
<div class="t" style="left:164.2px;top:206.00px;font-size:6.38px;color:#2a2a2a;transform:scaleX(0.893);transform-origin:0 0;-webkit-text-stroke:0.32px #2a2a2a">Water</div>
<div class="t" style="left:8.6px;top:259.00px;font-size:6.38px;color:#2a2a2a;transform:scaleX(0.893);transform-origin:0 0;-webkit-text-stroke:0.32px #2a2a2a">Anti Noclip</div>
<div class="t" style="left:8.6px;top:266.00px;font-size:6.38px;color:#2a2a2a;transform:scaleX(0.893);transform-origin:0 0;-webkit-text-stroke:0.32px #2a2a2a">Script</div>
<div class="t" style="left:47.3px;top:259.00px;font-size:6.38px;color:#2a2a2a;transform:scaleX(0.893);transform-origin:0 0;-webkit-text-stroke:0.32px #2a2a2a">Asphalt</div>
<div class="t" style="left:86.5px;top:259.00px;font-size:6.38px;color:#2a2a2a;transform:scaleX(0.893);transform-origin:0 0;-webkit-text-stroke:0.32px #2a2a2a">Badge</div>
<div class="t" style="left:86.5px;top:266.00px;font-size:6.38px;color:#2a2a2a;transform:scaleX(0.893);transform-origin:0 0;-webkit-text-stroke:0.32px #2a2a2a">Giver</div>
<div class="t" style="left:125.1px;top:259.00px;font-size:6.38px;color:#2a2a2a;transform:scaleX(0.893);transform-origin:0 0;-webkit-text-stroke:0.32px #2a2a2a">Baseplate</div>
<div class="t" style="left:164.2px;top:259.00px;font-size:6.38px;color:#2a2a2a;transform:scaleX(0.893);transform-origin:0 0;-webkit-text-stroke:0.32px #2a2a2a">Basic</div>
<div class="t" style="left:164.2px;top:266.00px;font-size:6.38px;color:#2a2a2a;transform:scaleX(0.893);transform-origin:0 0;-webkit-text-stroke:0.32px #2a2a2a">Coffee</div>
<div class="t" style="left:164.2px;top:273.00px;font-size:6.38px;color:#2a2a2a;transform:scaleX(0.893);transform-origin:0 0;-webkit-text-stroke:0.32px #2a2a2a">Table</div>
<!-- basic objects -->
<div class="a" style="left:0px;top:299px;width:211px;height:10px;background:#d6d6d6;border-top:0.6px solid #c4c4c4;border-bottom:0.6px solid #bdbdbd"></div>
<div class="t" style="left:1.0px;top:301.00px;font-size:6.94px;color:#1a1a1a;transform:scaleX(0.893);transform-origin:0 0;-webkit-text-stroke:0.32px #1a1a1a">Basic Objects</div>
<div class="a" style="left:0px;top:310px;width:211px;height:10.2px;background:#fff;border-bottom:0.6px solid #dcdcdc"></div>
<div class="t" style="left:2.0px;top:313.00px;font-size:6.72px;color:#1a1a1a;transform:scaleX(0.893);transform-origin:0 0;-webkit-text-stroke:0.32px #1a1a1a">pa</div>
<div class="a" style="left:0px;top:320.2px;width:211px;height:3.2px;background:#ededed"></div>
<div class="a" style="left:0px;top:323px;width:211px;height:221.6px;background:#fff;border:1px solid #a8a8a8;border-top:1.2px solid #9a9a9a"></div>
<div class="a" style="left:0.8px;top:357.2px;width:209px;height:9.5px;background:#5686d4;border-top:0.5px solid #4a76c0;border-bottom:0.5px solid #3f6cb6"></div>
<div class="t" style="left:15.0px;top:327.00px;font-size:6.61px;color:#1a1a1a;transform:scaleX(0.893);transform-origin:0 0;-webkit-text-stroke:0.32px #1a1a1a">Backpack</div>
<div class="t" style="left:15.0px;top:338.00px;font-size:6.61px;color:#1a1a1a;transform:scaleX(0.893);transform-origin:0 0;-webkit-text-stroke:0.32px #1a1a1a">CornerWedgePart</div>
<div class="t" style="left:15.0px;top:349.00px;font-size:6.61px;color:#1a1a1a;transform:scaleX(0.893);transform-origin:0 0;-webkit-text-stroke:0.32px #1a1a1a">Pants</div>
<div class="t" style="left:15.0px;top:359.00px;font-size:6.61px;color:#fff;transform:scaleX(0.893);transform-origin:0 0;-webkit-text-stroke:0.32px #fff">Part</div>
<div class="t" style="left:15.0px;top:370.00px;font-size:6.61px;color:#1a1a1a;transform:scaleX(0.893);transform-origin:0 0;-webkit-text-stroke:0.32px #1a1a1a">Sparkles</div>
<div class="t" style="left:15.0px;top:381.00px;font-size:6.61px;color:#1a1a1a;transform:scaleX(0.893);transform-origin:0 0;-webkit-text-stroke:0.32px #1a1a1a">SpawnLocation</div>
<div class="t" style="left:15.0px;top:392.00px;font-size:6.61px;color:#1a1a1a;transform:scaleX(0.893);transform-origin:0 0;-webkit-text-stroke:0.32px #1a1a1a">TrussPart</div>
<div class="t" style="left:15.0px;top:402.00px;font-size:6.61px;color:#1a1a1a;transform:scaleX(0.893);transform-origin:0 0;-webkit-text-stroke:0.32px #1a1a1a">WedgePart</div>
<div class="t" style="right:822.5px;top:339px;font-size:5.6px;color:#a4a4a4">Late 2010+</div>
<div class="t" style="right:822.5px;top:392px;font-size:5.6px;color:#a4a4a4">Late 2009+</div>
<div class="t" style="right:822.5px;top:403px;font-size:5.6px;color:#a4a4a4">Early 2010+</div>
<svg class="a" style="left:0;top:0" width="212" height="420"><path d="M3 328.5 H6.5 L7.3 327.6 H11 V334.5 H3Z" fill="#f2d060" stroke="#c8a030" stroke-width="0.5"/><rect x="4" y="330" width="6" height="3.8" fill="#ffe890"/><path d="M8 330 L11.2 326.2" stroke="#7a7a7a" stroke-width="1.1"/><path d="M7.5 337.1 L11.6 339.1 L11.6 342.6 L7.5 344.6 L3.4 342.6 L3.4 339.1Z" fill="#f2f2f2" stroke="#b0b0b0" stroke-width="0.7"/><path d="M3.4 339.1 L7.5 341.0 L11.6 339.1 M7.5 341.0 V344.6" fill="none" stroke="#b0b0b0" stroke-width="0.6"/><path d="M4.6 347 H10.8 L11.2 354.8 H9 L7.7 350 L6.4 354.8 H4.2Z" fill="#1e1e1e"/><path d="M7.5 358.2 L11.6 360.2 L11.6 363.7 L7.5 365.7 L3.4 363.7 L3.4 360.2Z" fill="#e8eef8" stroke="#ffffff" stroke-width="0.7"/><path d="M3.4 360.2 L7.5 362.09999999999997 L11.6 360.2 M7.5 362.09999999999997 V365.7" fill="none" stroke="#ffffff" stroke-width="0.6"/><path d="M7.3 369 V377 M3.2 373 H11.4" stroke="#c030a0" stroke-width="0.7"/><circle cx="10.5" cy="370" r="0.6" fill="#c030a0"/><circle cx="4.5" cy="376" r="0.6" fill="#c030a0"/><circle cx="10" cy="376.3" r="0.5" fill="#c030a0"/><circle cx="7.3" cy="383" r="2.2" fill="none" stroke="#111" stroke-width="1"/><path d="M7.3 379 V387 M3.3 383 H11.3 M4.5 380.2 L10.1 385.8 M10.1 380.2 L4.5 385.8" stroke="#111" stroke-width="0.8"/><circle cx="7.3" cy="383" r="1.2" fill="#fff"/><path d="M7.5 390.3 L11.6 392.3 L11.6 395.8 L7.5 397.8 L3.4 395.8 L3.4 392.3Z" fill="#f2f2f2" stroke="#b0b0b0" stroke-width="0.7"/><path d="M3.4 392.3 L7.5 394.2 L11.6 392.3 M7.5 394.2 V397.8" fill="none" stroke="#b0b0b0" stroke-width="0.6"/><path d="M7.5 400.7 L11.6 402.7 L11.6 406.2 L7.5 408.2 L3.4 406.2 L3.4 402.7Z" fill="#f2f2f2" stroke="#b0b0b0" stroke-width="0.7"/><path d="M3.4 402.7 L7.5 404.59999999999997 L11.6 402.7 M7.5 404.59999999999997 V408.2" fill="none" stroke="#b0b0b0" stroke-width="0.6"/></svg>
<div class="a" style="left:0px;top:548.9px;width:6.8px;height:6.6px;background:linear-gradient(135deg,#cfcfcf,#f6f6f6);border:0.6px solid #9a9a9a"></div>
<div class="t" style="left:9.2px;top:550.00px;font-size:6.72px;color:#1a1a1a;transform:scaleX(0.893);transform-origin:0 0;-webkit-text-stroke:0.32px #1a1a1a">Select inserted object</div>
<!-- explorer -->
<div class="a" style="left:811px;top:38px;width:1.2px;height:520px;background:#e4e4e4"></div>
<div class="a" style="left:812px;top:37.1px;width:212px;height:1.5px;background:#cfcfcf"></div>
<div class="a" style="left:812px;top:38.6px;width:212px;height:8.8px;background:#d9d9d9"></div>
<div class="a" style="left:812px;top:47.4px;width:212px;height:0.7px;background:#c6c6c6"></div>
<div class="a" style="left:812px;top:48.1px;width:212px;height:0.8px;background:#ececec"></div>
<div class="t" style="left:813.0px;top:41.00px;font-size:6.83px;color:#1a1a1a;transform:scaleX(0.893);transform-origin:0 0;-webkit-text-stroke:0.32px #1a1a1a">Explorer</div>
<div class="a" style="left:812.4px;top:48.8px;width:210.8px;height:247px;background:#fff;border:1px solid #a8a8a8;border-top:1.2px solid #a4a4a4;border-right:1px solid #b8b8b8"></div>
<div class="t" style="left:836.2px;top:53.00px;font-size:6.61px;color:#1a1a1a;transform:scaleX(0.893);transform-origin:0 0;-webkit-text-stroke:0.32px #1a1a1a">Workspace</div>
<div class="t" style="left:845.2px;top:64.00px;font-size:6.72px;color:#1a1a1a;transform:scaleX(0.893);transform-origin:0 0;-webkit-text-stroke:0.32px #1a1a1a">Camera</div>
<div class="t" style="left:845.2px;top:75.00px;font-size:6.72px;color:#1a1a1a;transform:scaleX(0.893);transform-origin:0 0;-webkit-text-stroke:0.32px #1a1a1a">Baseplate</div>
<div class="t" style="left:845.2px;top:85.00px;font-size:6.72px;color:#1a1a1a;transform:scaleX(0.893);transform-origin:0 0;-webkit-text-stroke:0.32px #1a1a1a">Part</div>
<div class="t" style="left:836.2px;top:96.00px;font-size:6.72px;color:#1a1a1a;transform:scaleX(0.893);transform-origin:0 0;-webkit-text-stroke:0.32px #1a1a1a">Players</div>
<div class="t" style="left:836.2px;top:107.00px;font-size:6.72px;color:#1a1a1a;transform:scaleX(0.893);transform-origin:0 0;-webkit-text-stroke:0.32px #1a1a1a">Lighting</div>
<div class="t" style="left:836.2px;top:117.00px;font-size:6.72px;color:#1a1a1a;transform:scaleX(0.893);transform-origin:0 0;-webkit-text-stroke:0.32px #1a1a1a">StarterGui</div>
<div class="t" style="left:836.2px;top:127.00px;font-size:6.72px;color:#1a1a1a;transform:scaleX(0.893);transform-origin:0 0;-webkit-text-stroke:0.32px #1a1a1a">StarterPack</div>
<div class="t" style="left:836.2px;top:138.00px;font-size:6.72px;color:#1a1a1a;transform:scaleX(0.893);transform-origin:0 0;-webkit-text-stroke:0.32px #1a1a1a">Debris</div>
<div class="t" style="left:836.2px;top:149.00px;font-size:6.72px;color:#1a1a1a;transform:scaleX(0.893);transform-origin:0 0;-webkit-text-stroke:0.32px #1a1a1a">Teams</div>
<div class="t" style="left:836.2px;top:160.00px;font-size:6.72px;color:#1a1a1a;transform:scaleX(0.893);transform-origin:0 0;-webkit-text-stroke:0.32px #1a1a1a">Soundscape</div>
<svg class="a" style="left:0;top:0" width="1024" height="200"><path d="M819 53.0 L819 56.0 L816.2 56.0Z" fill="#222"/><defs><radialGradient id="gl" cx="0.35" cy="0.3" r="0.8"><stop offset="0" stop-color="#9fe0c8"/><stop offset="0.6" stop-color="#2aa882"/><stop offset="1" stop-color="#1a7a6a"/></radialGradient></defs><circle cx="828.6999999999999" cy="55.8" r="4.3" fill="url(#gl)"/><path d="M827.3 54.0 Q829.3 53.5 829.8 55.5 Q828.3 57.5 827.9 58.5" fill="none" stroke="#3a7ac8" stroke-width="1"/><rect x="833.3" y="63.5" width="8.8" height="6.4" rx="0.6" fill="#2a3440"/><rect x="834.1999999999999" y="64.39999999999999" width="5.6" height="4.6" fill="#5a8ad0"/><rect x="840.3" y="64.8" width="1.2" height="1.6" fill="#999"/><path d="M837.8 73.3 L841.9 75.3 L841.9 78.8 L837.8 80.8 L833.6999999999999 78.8 L833.6999999999999 75.3Z" fill="#f4f4f4" stroke="#b8b8b8" stroke-width="0.7"/><path d="M833.6999999999999 75.3 L837.8 77.2 L841.9 75.3 M837.8 77.2 V80.8" fill="none" stroke="#b8b8b8" stroke-width="0.6"/><path d="M826.2 83.9 L828.8000000000001 85.9 L826.2 87.9Z" fill="#fff" stroke="#8a8a8a" stroke-width="0.5"/><path d="M837.8 83.8 L841.9 85.8 L841.9 89.3 L837.8 91.3 L833.6999999999999 89.3 L833.6999999999999 85.8Z" fill="#f4f4f4" stroke="#b8b8b8" stroke-width="0.7"/><path d="M833.6999999999999 85.8 L837.8 87.7 L841.9 85.8 M837.8 87.7 V91.3" fill="none" stroke="#b8b8b8" stroke-width="0.6"/><path d="M817.2 94.5 L819.8000000000001 96.5 L817.2 98.5Z" fill="#fff" stroke="#8a8a8a" stroke-width="0.5"/><rect x="824.3" y="98.1" width="4.6" height="4.2" fill="#3a7ad8"/><rect x="827.9" y="97.1" width="4.8" height="4.2" fill="#4aa838"/><circle cx="830.3" cy="95.69999999999999" r="1.5" fill="#e8b840"/><circle cx="826.5999999999999" cy="96.69999999999999" r="1.5" fill="#e8a030"/><circle cx="828.6999999999999" cy="108.2" r="3" fill="#f8e070" stroke="#d8b040" stroke-width="0.5"/><rect x="827.4" y="111.0" width="2.6" height="2" fill="#999"/><path d="M824.3 118.4 H827.8 L828.5999999999999 117.5 H832.6999999999999 V124.2 H824.3Z" fill="#f0cc5c" stroke="#c9a03a" stroke-width="0.5"/><rect x="825.3" y="119.8" width="6.4" height="4" fill="#fde58c"/><rect x="828.0999999999999" y="115.4" width="4.6" height="3.4" fill="#e8f0ff" stroke="#3a6ac8" stroke-width="0.6"/><path d="M824.3 128.9 H827.8 L828.5999999999999 128.0 H832.6999999999999 V134.7 H824.3Z" fill="#f0cc5c" stroke="#c9a03a" stroke-width="0.5"/><rect x="825.3" y="130.3" width="6.4" height="4" fill="#fde58c"/><path d="M829.3 129.5 L832.5 126.3" stroke="#888" stroke-width="1"/><circle cx="828.5999999999999" cy="137.5" r="0.7" fill="#e8b020"/><circle cx="826.3" cy="142.0" r="0.8" fill="#3070d0"/><circle cx="830.8" cy="141.5" r="0.8" fill="#d04080"/><circle cx="825.5" cy="144.3" r="0.8" fill="#205090"/><circle cx="828.9" cy="143.9" r="0.9" fill="#20a0c0"/><circle cx="831.8" cy="144.3" r="0.8" fill="#4060b0"/><circle cx="827.8" cy="140.3" r="0.5" fill="#999"/><path d="M824.3 150.4 H827.8 L828.5999999999999 149.50000000000003 H832.6999999999999 V156.20000000000002 H824.3Z" fill="#f0cc5c" stroke="#c9a03a" stroke-width="0.5"/><rect x="825.3" y="151.8" width="6.4" height="4" fill="#fde58c"/><rect x="827.6999999999999" y="150.20000000000002" width="4.4" height="3.6" fill="#fff8d8" stroke="#888" stroke-width="0.5"/><path d="M824.3 160.70000000000002 H826.6999999999999 L829.5 158.4 V165.9 L826.6999999999999 163.6 H824.3Z" fill="#505050"/><path d="M830.6999999999999 160.4 L833.0999999999999 158.9 M830.6999999999999 162.20000000000002 H833.3 M830.6999999999999 163.9 L833.0999999999999 165.4" stroke="#505050" stroke-width="0.7"/></svg>
<div class="a" style="left:812px;top:296.2px;width:212px;height:2.4px;background:#efefef"></div>
<div class="a" style="left:812px;top:298.2px;width:212px;height:10.3px;background:#d8d8d8;border-top:0.6px solid #c8c8c8;border-bottom:0.6px solid #c4c4c4"></div>
<div class="t" style="left:813.7px;top:301.00px;font-size:6.83px;color:#1a1a1a;transform:scaleX(0.893);transform-origin:0 0;-webkit-text-stroke:0.32px #1a1a1a">Property</div>
<div class="a" style="left:812.6px;top:310px;width:211.4px;height:9.6px;background:#efefef;border:0.6px solid #c4c4c4"></div>
<div class="a" style="left:812.6px;top:320.4px;width:210.6px;height:235.6px;background:#fff;border:1px solid #a4a4a4;border-top:1.2px solid #9a9a9a"></div>
<div class="a" style="left:813.6px;top:321.6px;width:208.6px;height:12px;background:#f2f5f9;border-bottom:0.6px solid #e0e4ea"></div>
<div class="t" style="left:815.0px;top:325.00px;font-size:7.06px;color:#1a1a1a;transform:scaleX(0.893);transform-origin:0 0;-webkit-text-stroke:0.32px #1a1a1a">Property</div>
<div class="t" style="left:916.2px;top:325.00px;font-size:7.06px;color:#1a1a1a;transform:scaleX(0.893);transform-origin:0 0;-webkit-text-stroke:0.32px #1a1a1a">Value</div>
<!-- tab row -->
<div class="a" style="left:211px;top:38px;width:600px;height:11.6px;background:#efefef"></div>
<div class="a" style="left:212.6px;top:38.1px;width:101.8px;height:11.6px;background:#fbfbfb;border:0.6px solid #d8d8d8;border-bottom:none"></div>
<div class="t" style="left:220.4px;top:41.00px;font-size:6.66px;color:#1a1a1a;transform:scaleX(0.893);transform-origin:0 0;-webkit-text-stroke:0.32px #1a1a1a">RantPlant's Place Number: 2</div>
<div class="a" style="left:299.3px;top:40.8px;width:6.4px;height:6.5px;background:linear-gradient(#f08a60,#d85a38);border:0.5px solid #c05030;border-radius:1px"></div>
<svg class="a" style="left:0;top:0" width="320" height="60"><path d="M300.9 42.4 L304.1 45.7 M304.1 42.4 L300.9 45.7" stroke="#fff" stroke-width="1"/></svg>
<!-- output -->
<div class="a" style="left:213px;top:452.4px;width:598px;height:2.7px;background:#efefef"></div>
<div class="a" style="left:215px;top:455.1px;width:596px;height:10.2px;background:#d8d8d8;border-top:0.6px solid #c8c8c8;border-bottom:0.6px solid #c0c0c0"></div>
<div class="t" style="left:216.3px;top:457.00px;font-size:6.94px;color:#1a1a1a;transform:scaleX(0.893);transform-origin:0 0;-webkit-text-stroke:0.32px #1a1a1a">Output</div>
<div class="a" style="left:213px;top:465.3px;width:598px;height:1.2px;background:#efefef"></div>
<div class="a" style="left:215.2px;top:466.4px;width:595.8px;height:90px;background:#fff;border:1px solid #a8a8a8;border-top:1.2px solid #9a9a9a"></div>
<div class="t" style="left:218.8px;top:472px;font-size:5.7px;color:#2c2c8c;-webkit-text-stroke:0.32px #2c2c8c">22:21:47 - Loading Place: 172751842_2</div>
<div class="t" style="left:218.8px;top:480px;font-size:5.75px;color:#2c2c8c;-webkit-text-stroke:0.32px #2c2c8c">22:21:47 - Loading Version: 1</div>
<div class="t" style="left:218.8px;top:487px;font-size:5.6px;color:#2c2c8c;-webkit-text-stroke:0.32px #2c2c8c">22:21:47 - Progress 0 / 506</div>
<div class="t" style="left:218.8px;top:495px;font-size:5.6px;color:#2c2c8c;-webkit-text-stroke:0.32px #2c2c8c">22:21:47 - Progress 6 / 506</div>
<div class="t" style="left:218.8px;top:502px;font-size:5.6px;color:#2c2c8c;-webkit-text-stroke:0.32px #2c2c8c">22:21:47 - Progress 506 / 506</div>
<div class="t" style="left:218.8px;top:510px;font-size:5.9px;color:#2c2c8c;-webkit-text-stroke:0.32px #2c2c8c">22:21:47 - Place loading finished!</div>
<!-- status bar -->
<div class="a" style="left:0px;top:559px;width:1024px;height:16.5px;background:linear-gradient(#f1f1f1,#ebebeb)"></div>
<div class="a" style="left:0px;top:575px;width:1024px;height:1px;background:#c8c8c8"></div>
<svg class="a" style="left:0;top:0" width="600" height="380"><path d="M568.6 354.6 Q568.4 352.6 569.8 353.2 L570.4 354 Q570.2 351.4 571.8 351.9 L572.3 353 Q572.6 351.2 574 351.6 L574.4 353 Q575 351.8 576 352.6 Q576.8 353.6 576.2 355.6 L575 358.6 Q574.2 360.2 572.8 360.2 Q571.6 360.2 570.8 358.8 Z" fill="#fafafa" stroke="#111" stroke-width="0.7" stroke-linejoin="round"/></svg>
</body></html>
